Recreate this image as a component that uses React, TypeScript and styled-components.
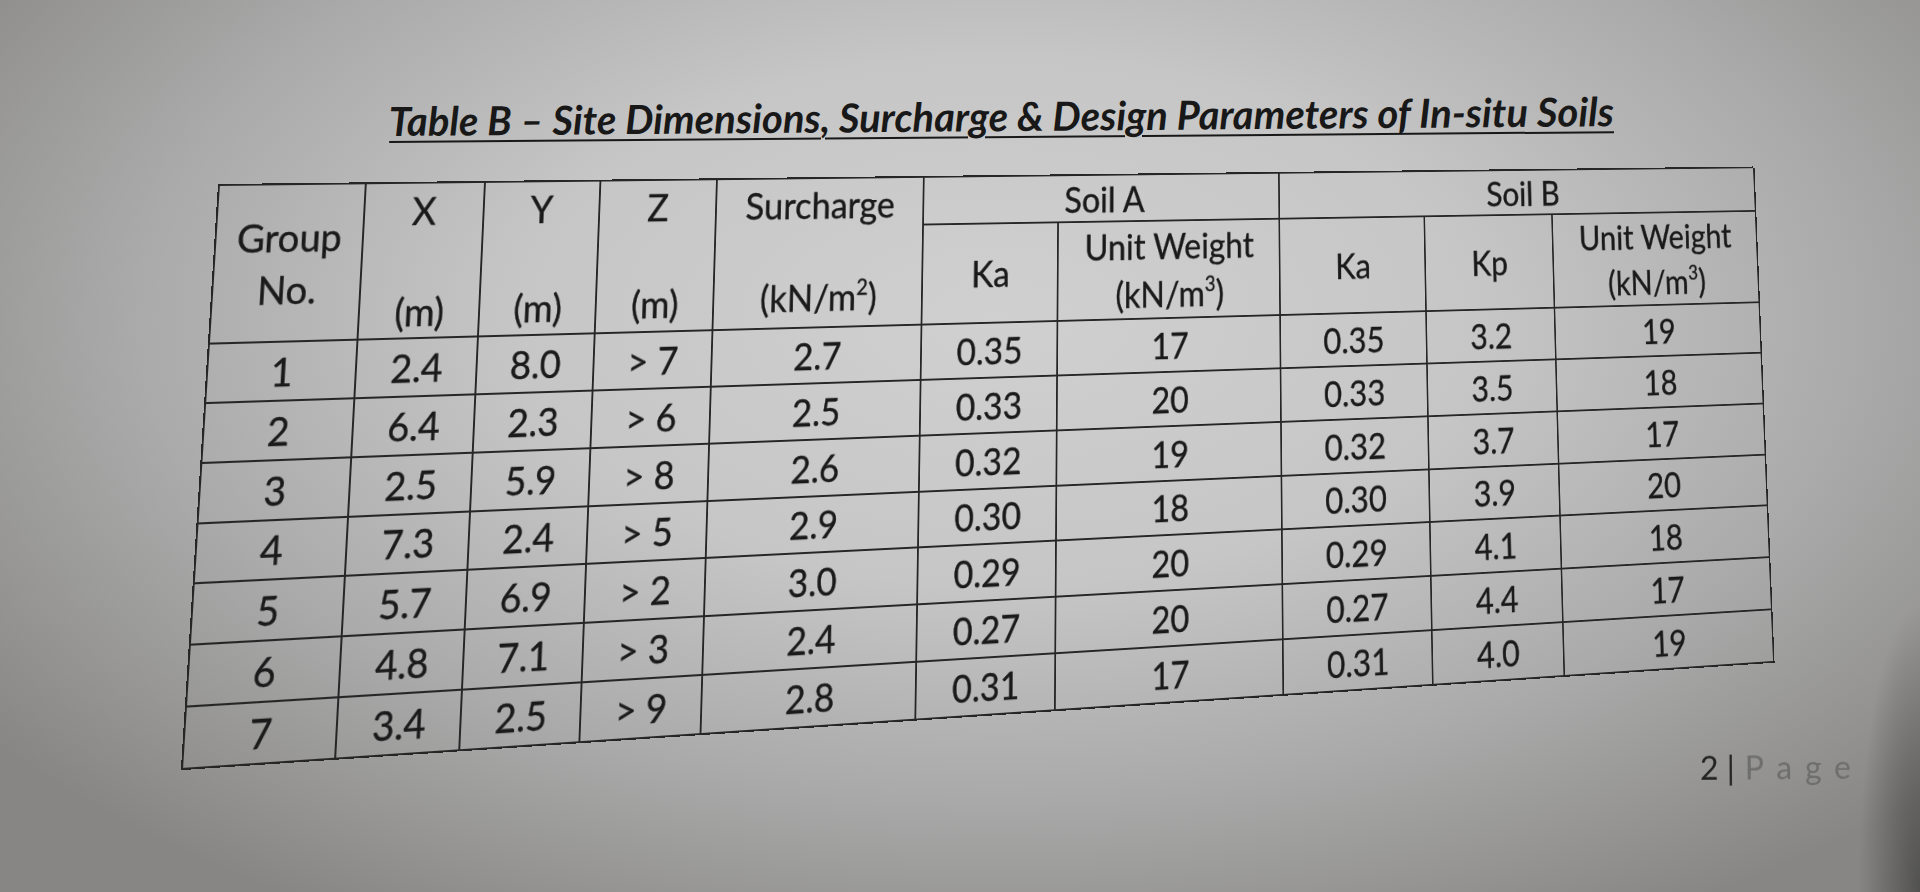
import styled, { createGlobalStyle } from "styled-components";

const GlobalStyle = createGlobalStyle`
  html, body {
    margin: 0;
    padding: 0;
    overflow: hidden;
  }
  body {
    font-family: Lato, "Open Sans", "Liberation Sans", sans-serif;
    color: #1c1c1c;
  }
`;

// the sheet is laid out flat, then warped onto the photographed quad
const FLAT_W = 1800;
const FLAT_H = 562;
const SHEET_CORNERS = [
  [0, 0],
  [1535, -17.5],
  [1555, 477],
  [-37, 584],
];

const COLUMNS = [149, 124, 123, 127, 233, 157, 267, 182, 165, 273];
const HEAD_BAND = 51;
const HEAD_SUB = 106;
const ROW_H = (FLAT_H - HEAD_BAND - HEAD_SUB) / 7;

function quadMatrix(w: number, h: number, q: number[][]) {
  const [[x0, y0], [x1, y1], [x2, y2], [x3, y3]] = q;
  const dx1 = x1 - x2, dx2 = x3 - x2, dx3 = x0 - x1 + x2 - x3;
  const dy1 = y1 - y2, dy2 = y3 - y2, dy3 = y0 - y1 + y2 - y3;
  const den = dx1 * dy2 - dx2 * dy1;
  const g = (dx3 * dy2 - dx2 * dy3) / den;
  const k = (dx1 * dy3 - dx3 * dy1) / den;
  const a = x1 - x0 + g * x1, b = x3 - x0 + k * x3;
  const d = y1 - y0 + g * y1, e = y3 - y0 + k * y3;
  const m = [a / w, d / w, 0, g / w, b / h, e / h, 0, k / h, 0, 0, 1, 0, x0, y0, 0, 1];
  return `matrix3d(${m.join(",")})`;
}

interface SoilRow {
  group: string;
  x: string;
  y: string;
  z: string;
  surcharge: string;
  kaA: string;
  uwA: string;
  kaB: string;
  kpB: string;
  uwB: string;
}

const ROWS: SoilRow[] = [
  { group: "1", x: "2.4", y: "8.0", z: "> 7", surcharge: "2.7", kaA: "0.35", uwA: "17", kaB: "0.35", kpB: "3.2", uwB: "19" },
  { group: "2", x: "6.4", y: "2.3", z: "> 6", surcharge: "2.5", kaA: "0.33", uwA: "20", kaB: "0.33", kpB: "3.5", uwB: "18" },
  { group: "3", x: "2.5", y: "5.9", z: "> 8", surcharge: "2.6", kaA: "0.32", uwA: "19", kaB: "0.32", kpB: "3.7", uwB: "17" },
  { group: "4", x: "7.3", y: "2.4", z: "> 5", surcharge: "2.9", kaA: "0.30", uwA: "18", kaB: "0.30", kpB: "3.9", uwB: "20" },
  { group: "5", x: "5.7", y: "6.9", z: "> 2", surcharge: "3.0", kaA: "0.29", uwA: "20", kaB: "0.29", kpB: "4.1", uwB: "18" },
  { group: "6", x: "4.8", y: "7.1", z: "> 3", surcharge: "2.4", kaA: "0.27", uwA: "20", kaB: "0.27", kpB: "4.4", uwB: "17" },
  { group: "7", x: "3.4", y: "2.5", z: "> 9", surcharge: "2.8", kaA: "0.31", uwA: "17", kaB: "0.31", kpB: "4.0", uwB: "19" },
];

export default function App() {
  const warp = quadMatrix(FLAT_W, FLAT_H, SHEET_CORNERS);

  return (
    <Paper>
      <GlobalStyle />
      <TitleRow>
        <Title>Table B – Site Dimensions, Surcharge &amp; Design Parameters of In-situ Soils</Title>
      </TitleRow>

      <TableArea>
        <Sheet $warp={warp}>
          <SplitHead $col="1" $row="1 / span 2" $centered>
            <span>Group</span>
            <span>No.</span>
          </SplitHead>
          <SplitHead $col="2" $row="1 / span 2" $drop={4}>
            <span>X</span>
            <span>(m)</span>
          </SplitHead>
          <SplitHead $col="3" $row="1 / span 2" $drop={3}>
            <span>Y</span>
            <span>(m)</span>
          </SplitHead>
          <SplitHead $col="4" $row="1 / span 2" $drop={2}>
            <span>Z</span>
            <span>(m)</span>
          </SplitHead>
          <SplitHead $col="5" $row="1 / span 2" $drop={-1}>
            <span>Surcharge</span>
            <span>(kN/m<sup>2</sup>)</span>
          </SplitHead>
          <Cell $col="6 / span 2" $row="1">Soil A</Cell>
          <Cell $col="8 / span 3" $row="1">Soil B</Cell>

          <Cell $col="6" $row="2">Ka</Cell>
          <SplitHead $col="7" $row="2" $centered>
            <span>Unit Weight</span>
            <span>(kN/m<sup>3</sup>)</span>
          </SplitHead>
          <Cell $col="8" $row="2">Ka</Cell>
          <Cell $col="9" $row="2">Kp</Cell>
          <SplitHead $col="10" $row="2" $centered>
            <span>Unit Weight</span>
            <span>(kN/m<sup>3</sup>)</span>
          </SplitHead>

          {ROWS.map((r) => (
            <DataRow key={r.group}>
              <Cell>{r.group}</Cell>
              <Cell>{r.x}</Cell>
              <Cell>{r.y}</Cell>
              <Cell>{r.z}</Cell>
              <Cell>{r.surcharge}</Cell>
              <Cell>{r.kaA}</Cell>
              <Cell>{r.uwA}</Cell>
              <Cell>{r.kaB}</Cell>
              <Cell>{r.kpB}</Cell>
              <Cell>{r.uwB}</Cell>
            </DataRow>
          ))}
        </Sheet>
      </TableArea>

      <Footer>
        <PageNo>2</PageNo>
        <Divider>|</Divider>
        <PageWord>Page</PageWord>
      </Footer>
    </Paper>
  );
}

const Paper = styled.div`
  position: relative;
  width: 1920px;
  height: 892px;
  overflow: hidden;
  display: flex;
  flex-direction: column;
  background:
    radial-gradient(ellipse 3.2% 32% at 100% 100%, rgba(45, 45, 45, 0.6), rgba(45, 45, 45, 0) 100%),
    radial-gradient(ellipse 66% 78% at 52% 36%, #d0d0d0 0%, #c6c6c6 38%, #aaaaaa 68%, #878684 100%);
`;

const TitleRow = styled.div`
  padding: 98px 0 0 389px;
  height: 46px;
`;

const Title = styled.h1`
  margin: 0;
  font-size: 40px;
  line-height: 46px;
  font-weight: 700;
  font-style: italic;
  white-space: nowrap;
  color: #181818;
  text-decoration: underline;
  text-decoration-thickness: 2px;
  text-underline-offset: 5px;
  transform: rotate(-0.46deg);
  transform-origin: left center;
`;

const TableArea = styled.div`
  margin-top: 40px;
  padding-left: 218px;
  height: ${FLAT_H}px;
`;

const Sheet = styled.div<{ $warp: string }>`
  display: grid;
  grid-template-columns: ${COLUMNS.map((c) => `${c}px`).join(" ")};
  grid-template-rows: ${HEAD_BAND}px ${HEAD_SUB}px repeat(7, ${ROW_H}px);
  width: ${FLAT_W}px;
  box-sizing: border-box;
  border-top: 2px solid #262626;
  border-left: 2px solid #262626;
  transform-origin: 0 0;
  transform: ${(p) => p.$warp};
  font-size: 38.5px;
  line-height: 52px;
  color: #1a1a1a;
  -webkit-text-stroke: 0.4px #1a1a1a;

  sup {
    font-size: 0.58em;
    line-height: 0;
    vertical-align: 0.7em;
  }
`;

const DataRow = styled.div`
  display: contents;
`;

const Cell = styled.div<{ $col?: string; $row?: string }>`
  grid-column: ${(p) => p.$col ?? "auto"};
  grid-row: ${(p) => p.$row ?? "auto"};
  display: flex;
  align-items: center;
  justify-content: center;
  border-right: 2px solid #262626;
  border-bottom: 2px solid #262626;
  white-space: nowrap;
`;

const SplitHead = styled(Cell)<{ $centered?: boolean; $drop?: number }>`
  flex-direction: column;
  justify-content: ${(p) => (p.$centered ? "center" : "space-between")};
  padding: ${(p) => (p.$centered ? "0" : "1px 0 4px")};

  & > span:last-child {
    margin-bottom: ${(p) => -(p.$drop ?? 0)}px;
  }
`;

const Footer = styled.div`
  display: flex;
  justify-content: flex-end;
  align-items: center;
  margin-top: 8px;
  padding-right: 69px;
  font-size: 32px;
  line-height: 38px;
  transform: rotate(-0.4deg);
`;

const PageNo = styled.span`
  color: #222;
`;

const Divider = styled.span`
  color: #222;
  margin: 0 10px 0 8px;
`;

const PageWord = styled.span`
  color: #6e6e6e;
  letter-spacing: 0.4em;
  margin-right: -0.4em;
`;
